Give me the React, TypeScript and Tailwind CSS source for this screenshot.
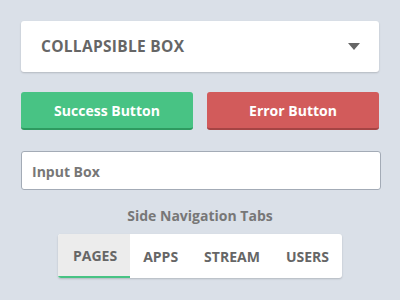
import React from 'react';

const tabs = ['PAGES', 'APPS', 'STREAM', 'USERS'];

export default function App() {
  return (
    <div
      className="w-[400px] h-[300px] bg-[#dae0e8] flex flex-col px-[21px] pt-[21px] overflow-hidden"
      style={{ fontFamily: '"Open Sans", "Noto Sans", sans-serif' }}
    >
      {/* collapsible box */}
      <div className="h-[51px] w-[358px] bg-white rounded-[3px] shadow-[0_1px_2px_rgba(0,0,0,0.18)] flex items-center justify-between pl-[20px] pr-[19px]">
        <span className="text-[15.5px] font-bold text-[#666] tracking-[0.3px]">COLLAPSIBLE BOX</span>
        <svg width="12" height="7" viewBox="0 0 12 7">
          <path d="M0 0 H12 L6 7 Z" fill="#666" />
        </svg>
      </div>

      {/* buttons */}
      <div className="flex gap-[14px] mt-[20px] w-[358px]">
        <button className="flex-1 h-[38px] rounded-[3px] bg-[#48c384] border-b-2 border-[#2e9a60] text-white text-[14px] font-bold">
          Success Button
        </button>
        <button className="flex-1 h-[38px] rounded-[3px] bg-[#d25b5b] border-b-2 border-[#a54444] text-white text-[14px] font-bold">
          Error Button
        </button>
      </div>

      {/* input */}
      <div className="mt-[21px] h-[39px] w-[360px] bg-white border border-[#a3abb6] rounded-[3px] flex items-center pl-[10px] pt-[2px]">
        <span className="text-[14px] font-bold text-[#777]">Input Box</span>
      </div>

      {/* tabs */}
      <div className="mt-[15px] text-center text-[14px] font-bold text-[#777]">Side Navigation Tabs</div>
      <div className="mt-[8px] flex justify-center">
        <div className="flex h-[44px] bg-white rounded-[3px] shadow-[0_1px_2px_rgba(0,0,0,0.18)] overflow-hidden">
          {tabs.map((t, i) => (
            <div
              key={t}
              className={
                i === 0
                  ? 'flex items-center pl-[15px] pr-[13px] bg-[#ececec] border-b-2 border-[#48c384] text-[14px] font-bold text-[#666]'
                  : 'flex items-center px-[13px] text-[14px] font-bold text-[#666]'
              }
            >
              {t}
            </div>
          ))}
        </div>
      </div>
    </div>
  );
}
